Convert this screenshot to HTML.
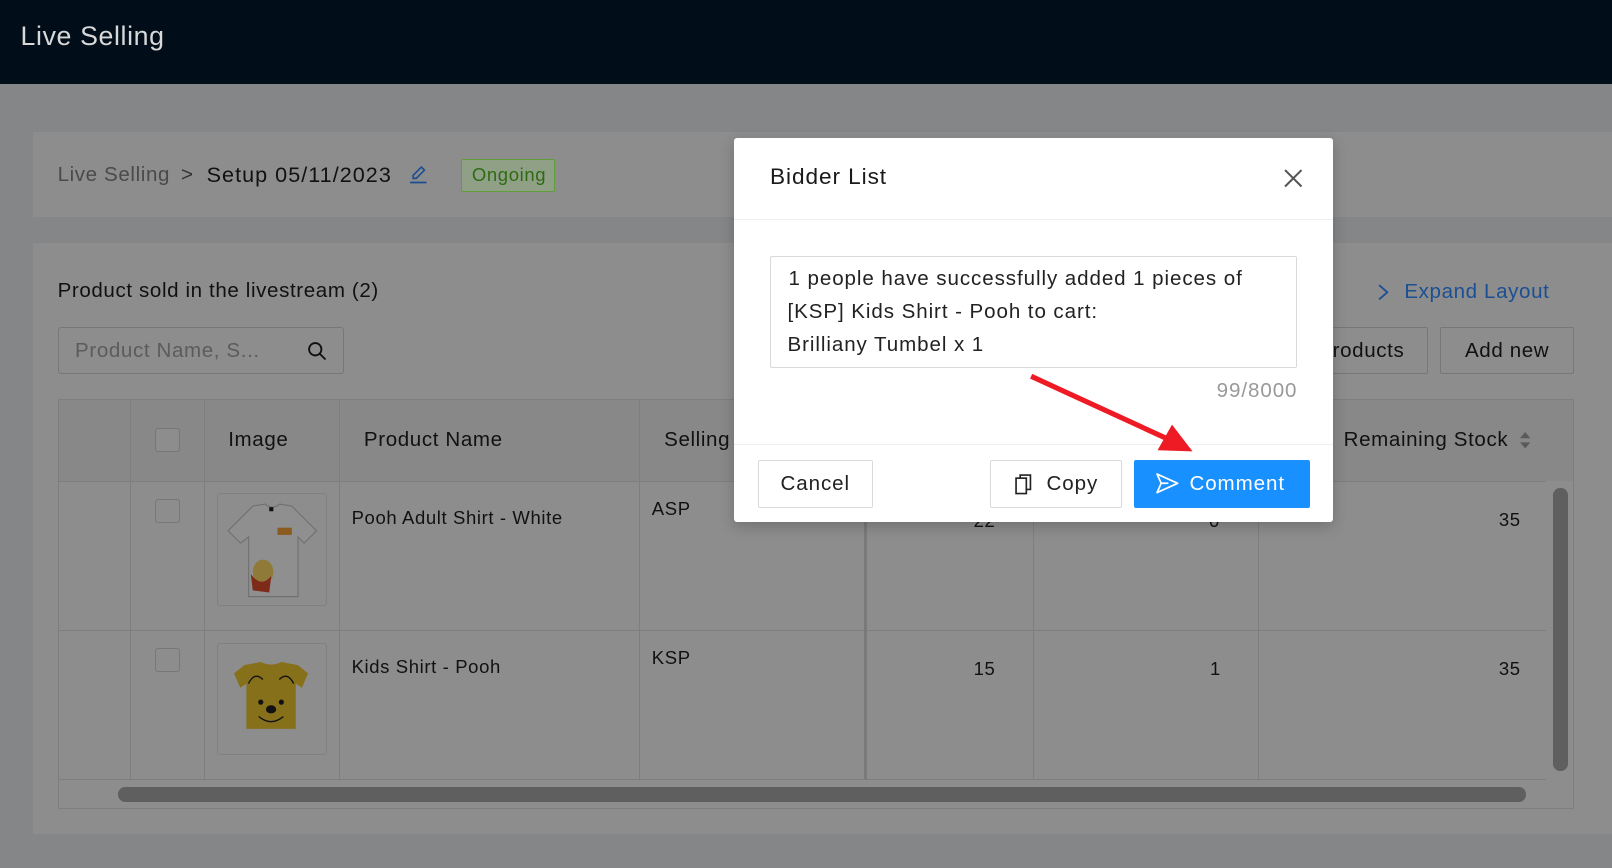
<!DOCTYPE html>
<html><head><meta charset="utf-8">
<style>
*{margin:0;padding:0;box-sizing:border-box}
html,body{width:1612px;height:868px;overflow:hidden;background:#858688;font-family:"Liberation Sans",sans-serif;letter-spacing:0.6px}
#w{position:absolute;left:0;top:0;width:1568px;height:844px;zoom:1.02806;}
.a{position:absolute}
.t{position:absolute;white-space:nowrap}
.hdr{left:0;top:0;width:1568px;height:82px;background:#010e1a}
.card{background:#8d8d8d}
.btn{position:absolute;border:1px solid #777;background:#8d8d8d;font-size:20px;color:#111;display:flex;align-items:center;justify-content:center;border-radius:2px}
.vl{position:absolute;width:1px;background:#7e7e7e}
.hl{position:absolute;height:1px;background:#7e7e7e}
.cb{position:absolute;width:24px;height:24px;border:1px solid #777;border-radius:3px;background:#8d8d8d}
.cell{font-size:18px;color:#111}
.m{font-size:20px;color:#222;letter-spacing:0.9px}
</style></head><body><div id="w">
<div class="a hdr"></div>
<div class="t" style="left:20px;top:20px;font-size:26px;color:#d8d8d8">Live Selling</div>

<div class="a card" style="left:32px;top:128px;width:1536px;height:83px"></div>
<div class="t" style="left:56px;top:159px;font-size:20px;color:#4a4a4a">Live Selling</div>
<div class="t" style="left:176px;top:159px;font-size:20px;color:#333">&gt;</div>
<div class="t" style="left:201px;top:158px;font-size:21px;color:#111;letter-spacing:1px">Setup 05/11/2023</div>
<svg class="a" style="left:397px;top:160px" width="20" height="20" viewBox="0 0 20 20"><path d="M5 14 L5 11 L13 3 L16 6 L8 14 Z" fill="none" stroke="#1d4e8f" stroke-width="1.6"/><path d="M2 18 H18" stroke="#1d4e8f" stroke-width="1.6"/></svg>
<div class="a" style="left:448px;top:155px;width:92px;height:32px;border:1px solid #5f9e3a;background:#8fa086;border-radius:2px"></div>
<div class="t" style="left:459px;top:160px;font-size:18px;color:#2e6b12">Ongoing</div>

<div class="a card" style="left:32px;top:236px;width:1536px;height:575px"></div>
<div class="t" style="left:56px;top:271px;font-size:20px;color:#111">Product sold in the livestream (2)</div>
<div class="a" style="left:56px;top:318px;width:279px;height:46px;border:1px solid #777;border-radius:3px"></div>
<div class="t" style="left:73px;top:330px;font-size:20px;color:#5c5c5c">Product Name, S...</div>
<svg class="a" style="left:298px;top:331px" width="22" height="22" viewBox="0 0 22 22"><circle cx="9" cy="9" r="6" fill="none" stroke="#111" stroke-width="1.8"/><path d="M13.5 13.5 L19 19" stroke="#111" stroke-width="1.8"/></svg>
<svg class="a" style="left:1338px;top:274px" width="14" height="20" viewBox="0 0 14 20"><path d="M3 3 L11 10 L3 17" fill="none" stroke="#1b4f94" stroke-width="1.8"/></svg>
<div class="t" style="left:1366px;top:272px;font-size:20px;color:#1b4f94">Expand Layout</div>
<div class="btn" style="left:1260px;top:318px;width:129px;height:46px;justify-content:flex-end;padding-right:22px">roducts</div>
<div class="btn" style="left:1401px;top:318px;width:130px;height:46px">Add new</div>

<div class="a" style="left:56px;top:388px;width:1475px;height:399px;border:1px solid #7e7e7e;background:#8d8d8d"></div>
<div class="a" style="left:57px;top:389px;width:1473px;height:79px;background:#888"></div>
<div class="hl" style="left:56px;top:468px;width:1448px"></div>
<div class="hl" style="left:56px;top:613px;width:1448px"></div>
<div class="hl" style="left:56px;top:758px;width:1448px"></div>
<div class="vl" style="left:126px;top:388px;height:370px"></div>
<div class="vl" style="left:198px;top:388px;height:370px"></div>
<div class="vl" style="left:330px;top:388px;height:370px"></div>
<div class="vl" style="left:622px;top:388px;height:370px"></div>
<div class="a" style="left:840px;top:468px;width:3px;height:290px;background:#7a7a7a"></div>
<div class="vl" style="left:1005px;top:468px;height:290px"></div>
<div class="vl" style="left:1224px;top:468px;height:290px"></div>
<div class="cb" style="left:151px;top:416px"></div>
<div class="cb" style="left:151px;top:485px"></div>
<div class="cb" style="left:151px;top:630px"></div>
<div class="t" style="left:222px;top:416px;font-size:20px;color:#111">Image</div>
<div class="t" style="left:354px;top:416px;font-size:20px;color:#111">Product Name</div>
<div class="t" style="left:646px;top:416px;font-size:20px;color:#111">Selling</div>
<div class="t" style="left:1307px;top:416px;font-size:20px;color:#111">Remaining Stock</div>
<svg class="a" style="left:1478px;top:418px" width="12" height="20" viewBox="0 0 12 20"><path d="M1 8 L6 2 L11 8Z M1 12 L6 18 L11 12Z" fill="#5a5a5a"/></svg>

<div class="a" style="left:211px;top:480px;width:107px;height:109px;border:1px solid #808080;border-radius:3px"></div>
<svg class="a" style="left:218px;top:488px" width="94" height="96" viewBox="0 0 94 96"><path d="M28 4 L40 2 Q47 8 54 2 L66 4 L90 28 L78 40 L72 34 L72 92 L24 92 L24 34 L16 40 L4 28 Z" fill="#8f8f8f" stroke="#6e6e6e"/><rect x="44" y="5" width="4" height="4" fill="#111"/><rect x="52" y="25" width="14" height="7" fill="#8b5a1e"/><ellipse cx="38" cy="68" rx="10" ry="12" fill="#8f7a3a"/><path d="M26 70 Q36 84 46 72 L44 88 L28 86Z" fill="#7d2a18"/></svg>
<div class="a" style="left:211px;top:625px;width:107px;height:109px;border:1px solid #808080;border-radius:3px"></div>
<svg class="a" style="left:226px;top:643px" width="76" height="68" viewBox="0 0 76 68"><path d="M12 4 L28 1 Q38 6 48 1 L64 4 L74 12 L68 26 L62 22 L62 66 L14 66 L14 22 L8 26 L2 12 Z" fill="#86701a"/><path d="M16 22 Q22 10 30 18 M46 18 Q54 10 60 22" stroke="#111" fill="none" stroke-width="1.3"/><circle cx="28" cy="40" r="2.5" fill="#111"/><circle cx="48" cy="40" r="2.5" fill="#111"/><ellipse cx="38" cy="47" rx="5" ry="4" fill="#111"/><path d="M26 54 Q38 64 50 54" stroke="#111" fill="none" stroke-width="1.3"/></svg>

<div class="t cell" style="left:342px;top:493px">Pooh Adult Shirt - White</div>
<div class="t cell" style="left:634px;top:484px">ASP</div>
<div class="t cell" style="left:947px;top:496px">22</div>
<div class="t cell" style="left:1176px;top:496px">0</div>
<div class="t cell" style="left:1458px;top:495px">35</div>
<div class="t cell" style="left:342px;top:638px">Kids Shirt - Pooh</div>
<div class="t cell" style="left:634px;top:629px">KSP</div>
<div class="t cell" style="left:947px;top:640px">15</div>
<div class="t cell" style="left:1177px;top:640px">1</div>
<div class="t cell" style="left:1458px;top:640px">35</div>
<div class="a" style="left:115px;top:766px;width:1369px;height:14px;border-radius:7px;background:#5f5f5f"></div>
<div class="a" style="left:1511px;top:475px;width:14px;height:275px;border-radius:7px;background:#5f5f5f"></div>

<!-- modal -->
<div class="a" style="left:714px;top:134px;width:583px;height:374px;background:#fff;border-radius:3px;box-shadow:0 4px 14px rgba(0,0,0,.2)"></div>
<div class="t" style="left:749px;top:160px;font-size:22px;color:#1a1a1a;letter-spacing:0.9px">Bidder List</div>
<svg class="a" style="left:1248px;top:163px" width="20" height="20" viewBox="0 0 20 20"><path d="M2 2 L18 18 M18 2 L2 18" stroke="#555" stroke-width="2"/></svg>
<div class="a" style="left:714px;top:213px;width:583px;height:1px;background:#eee"></div>
<div class="a" style="left:749px;top:249px;width:513px;height:109px;border:1px solid #d9d9d9;border-radius:2px"></div>
<div class="t m" style="left:767px;top:260px">1 people have successfully added 1 pieces of</div>
<div class="t m" style="left:766px;top:292px">[KSP] Kids Shirt - Pooh to cart:</div>
<div class="t m" style="left:766px;top:324px">Brilliany Tumbel x 1</div>
<div class="t" style="right:306px;top:369px;font-size:20px;color:#999;letter-spacing:0.9px">99/8000</div>
<div class="a" style="left:714px;top:432px;width:583px;height:1px;background:#eee"></div>
<div class="a m" style="left:737px;top:447px;width:112px;height:47px;border:1px solid #d9d9d9;border-radius:2px;display:flex;align-items:center;justify-content:center">Cancel</div>
<div class="a m" style="left:963px;top:447px;width:128px;height:47px;border:1px solid #d9d9d9;border-radius:2px;display:flex;align-items:center;padding-left:54px">Copy</div>
<svg class="a" style="left:986px;top:460px" width="18" height="22" viewBox="0 0 18 22"><rect x="2" y="5" width="10" height="15" fill="none" stroke="#222" stroke-width="1.6"/><path d="M6 5 V2 H16 V16 H12" fill="none" stroke="#222" stroke-width="1.6"/></svg>
<div class="a m" style="left:1103px;top:447px;width:171px;height:47px;background:#1890ff;border-radius:2px;color:#fff;display:flex;align-items:center;padding-left:54px">Comment</div>
<svg class="a" style="left:1123px;top:459px" width="24" height="22" viewBox="0 0 24 22"><path d="M2 2 L22 11 L2 20 L6 11 Z M6 11 H13" fill="none" stroke="#fff" stroke-width="1.7" stroke-linejoin="round"/></svg>
<svg class="a" style="left:0;top:0" width="1568" height="844"><line x1="1003" y1="366" x2="1138" y2="428" stroke="#ee1a24" stroke-width="5"/><path d="M1160 439 L1126 438 L1140 413 Z" fill="#ee1a24"/></svg>
</div></body></html>
